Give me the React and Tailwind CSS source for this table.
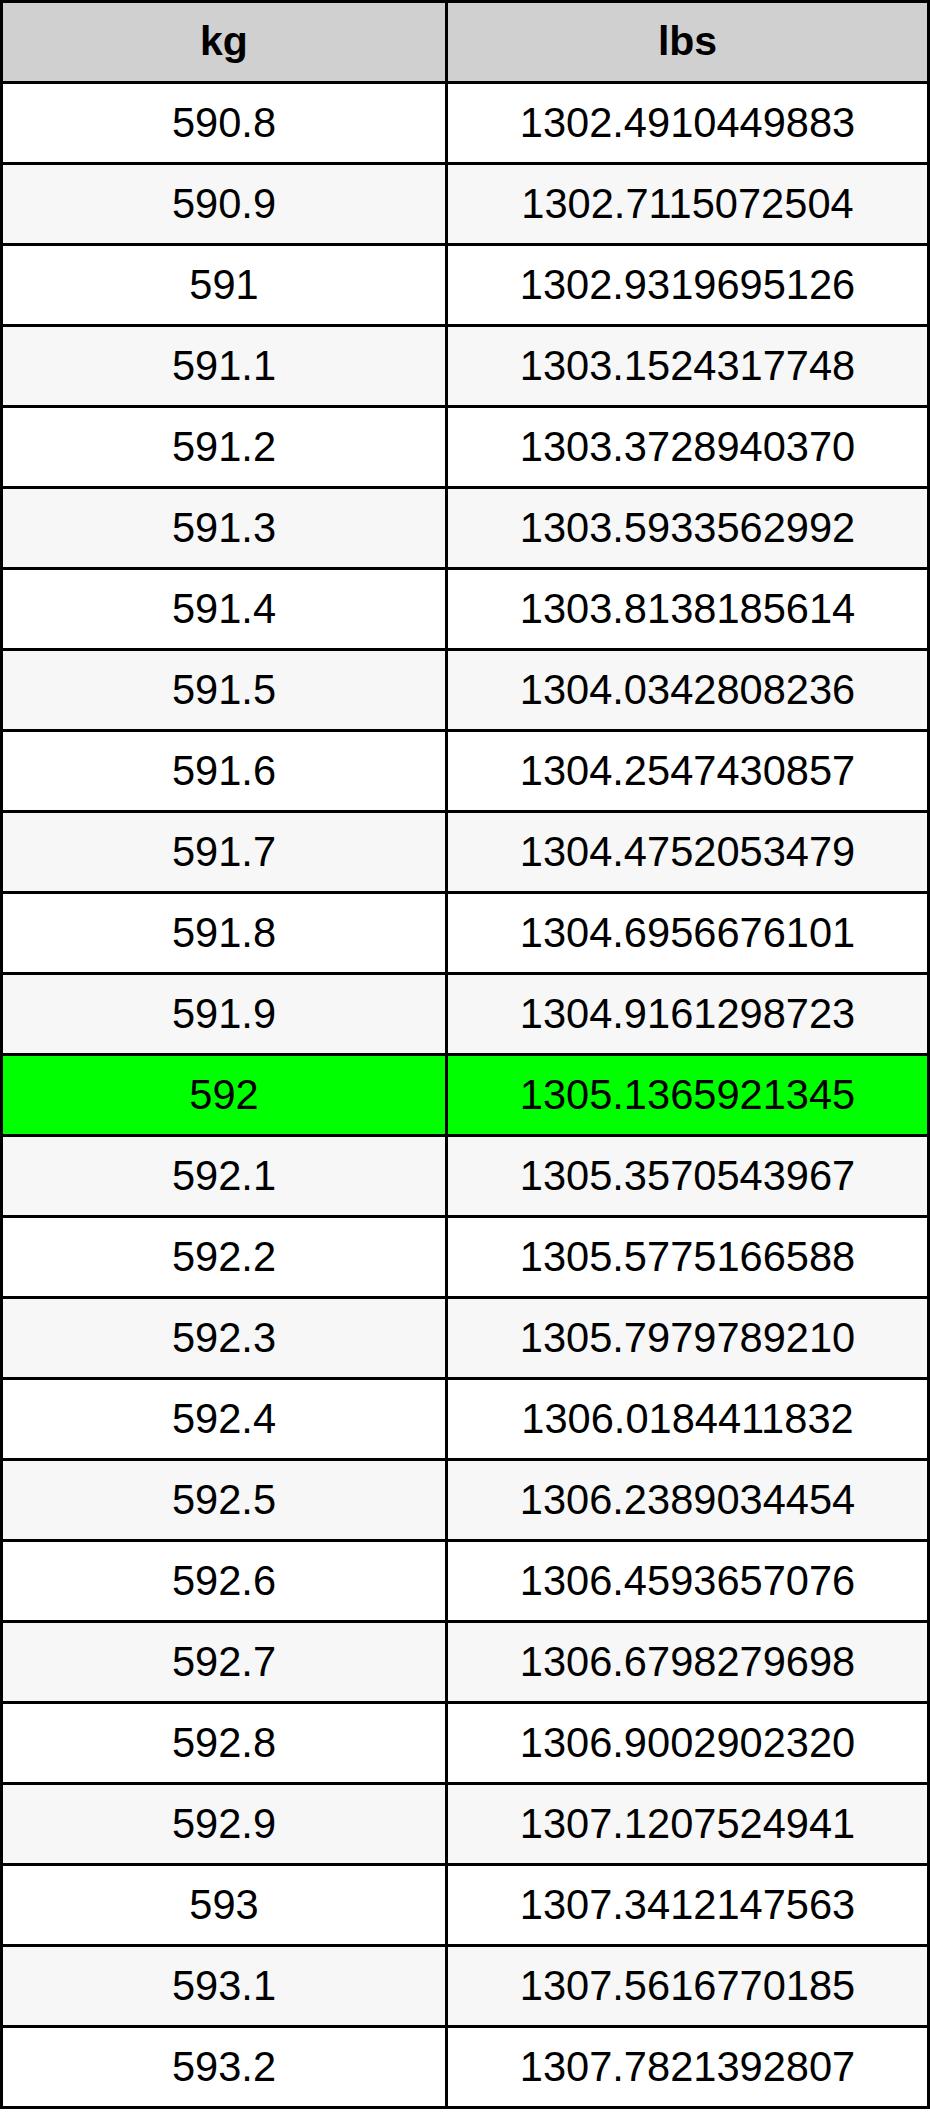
import React from "react";

const rows = [
  ["590.8", "1302.4910449883"],
  ["590.9", "1302.7115072504"],
  ["591", "1302.9319695126"],
  ["591.1", "1303.1524317748"],
  ["591.2", "1303.3728940370"],
  ["591.3", "1303.5933562992"],
  ["591.4", "1303.8138185614"],
  ["591.5", "1304.0342808236"],
  ["591.6", "1304.2547430857"],
  ["591.7", "1304.4752053479"],
  ["591.8", "1304.6956676101"],
  ["591.9", "1304.9161298723"],
  ["592", "1305.1365921345"],
  ["592.1", "1305.3570543967"],
  ["592.2", "1305.5775166588"],
  ["592.3", "1305.7979789210"],
  ["592.4", "1306.0184411832"],
  ["592.5", "1306.2389034454"],
  ["592.6", "1306.4593657076"],
  ["592.7", "1306.6798279698"],
  ["592.8", "1306.9002902320"],
  ["592.9", "1307.1207524941"],
  ["593", "1307.3412147563"],
  ["593.1", "1307.5616770185"],
  ["593.2", "1307.7821392807"],
];

export default function App() {
  return (
    <div className="w-[930px] bg-white font-['Liberation_Sans',Arial,sans-serif] text-black">
      <div className="border-[3px] border-black">
        <div className="flex h-[78px] bg-[#d0d0d0] text-[41px] font-bold">
          <div className="flex w-[445px] items-center justify-center border-r-[3px] border-black">kg</div>
          <div className="flex flex-1 items-center justify-center">lbs</div>
        </div>
        {rows.map(([kg, lbs], i) => {
          const bg = i === 12 ? "bg-[#00ff00]" : i % 2 === 1 ? "bg-[#f7f7f7]" : "bg-white";
          return (
            <div key={kg} className={`flex h-[81px] border-t-[3px] border-black text-[41.6px] ${bg}`}>
              <div className="flex w-[445px] items-center justify-center border-r-[3px] border-black">{kg}</div>
              <div className="flex flex-1 items-center justify-center">{lbs}</div>
            </div>
          );
        })}
      </div>
    </div>
  );
}
